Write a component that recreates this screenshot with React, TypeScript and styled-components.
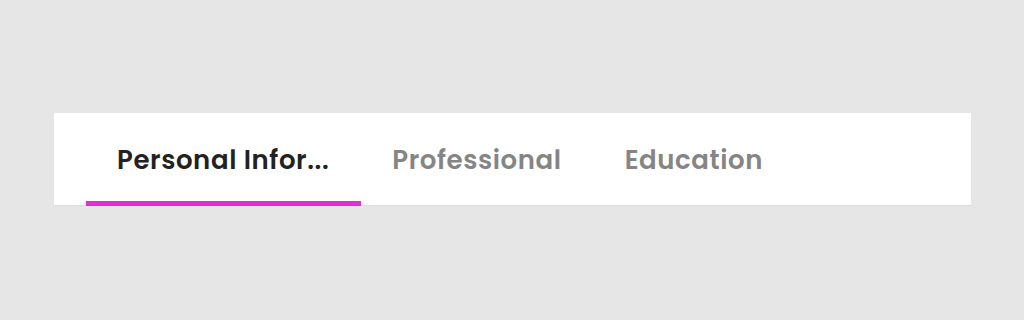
import React, { useState } from 'react'
import styled, { createGlobalStyle } from 'styled-components'

const GlobalStyle = createGlobalStyle`
  html, body {
    margin: 0;
    padding: 0;
    background: #e6e6e6;
  }
`

const Page = styled.div`
  width: 1024px;
  height: 320px;
  box-sizing: border-box;
  padding: 113px 53px 0 54px;
  background: #e6e6e6;
`

const TabBar = styled.div`
  display: flex;
  align-items: stretch;
  height: 92px;
  padding: 0 32px;
  background: #ffffff;
  border-bottom: 1px solid #dcdcdc;
`

const Tab = styled.button<{ $active?: boolean }>`
  position: relative;
  display: flex;
  align-items: center;
  padding: 2px 32px 0 31px;
  border: none;
  background: transparent;
  cursor: pointer;
  font-family: Poppins, Inter, 'Noto Sans', sans-serif;
  font-size: 26px;
  font-weight: 600;
  letter-spacing: 0.6px;
  color: ${({ $active }) => ($active ? '#222222' : '#858585')};
`

const Label = styled.span`
  display: block;
  white-space: nowrap;
`

const Indicator = styled.span`
  position: absolute;
  left: 0;
  right: 0;
  bottom: -1px;
  height: 5px;
  background: #e02ed0;
`

const tabs = [
  { key: 'personal', label: 'Personal Infor...', title: 'Personal Information' },
  { key: 'professional', label: 'Professional', title: 'Professional' },
  { key: 'education', label: 'Education', title: 'Education' },
]

export default function App() {
  const [active, setActive] = useState('personal')
  return (
    <>
      <GlobalStyle />
      <Page>
        <TabBar>
          {tabs.map((t) => (
            <Tab
              key={t.key}
              title={t.title}
              $active={active === t.key}
              onClick={() => setActive(t.key)}
            >
              <Label>{t.label}</Label>
              {active === t.key && <Indicator />}
            </Tab>
          ))}
        </TabBar>
      </Page>
    </>
  )
}
